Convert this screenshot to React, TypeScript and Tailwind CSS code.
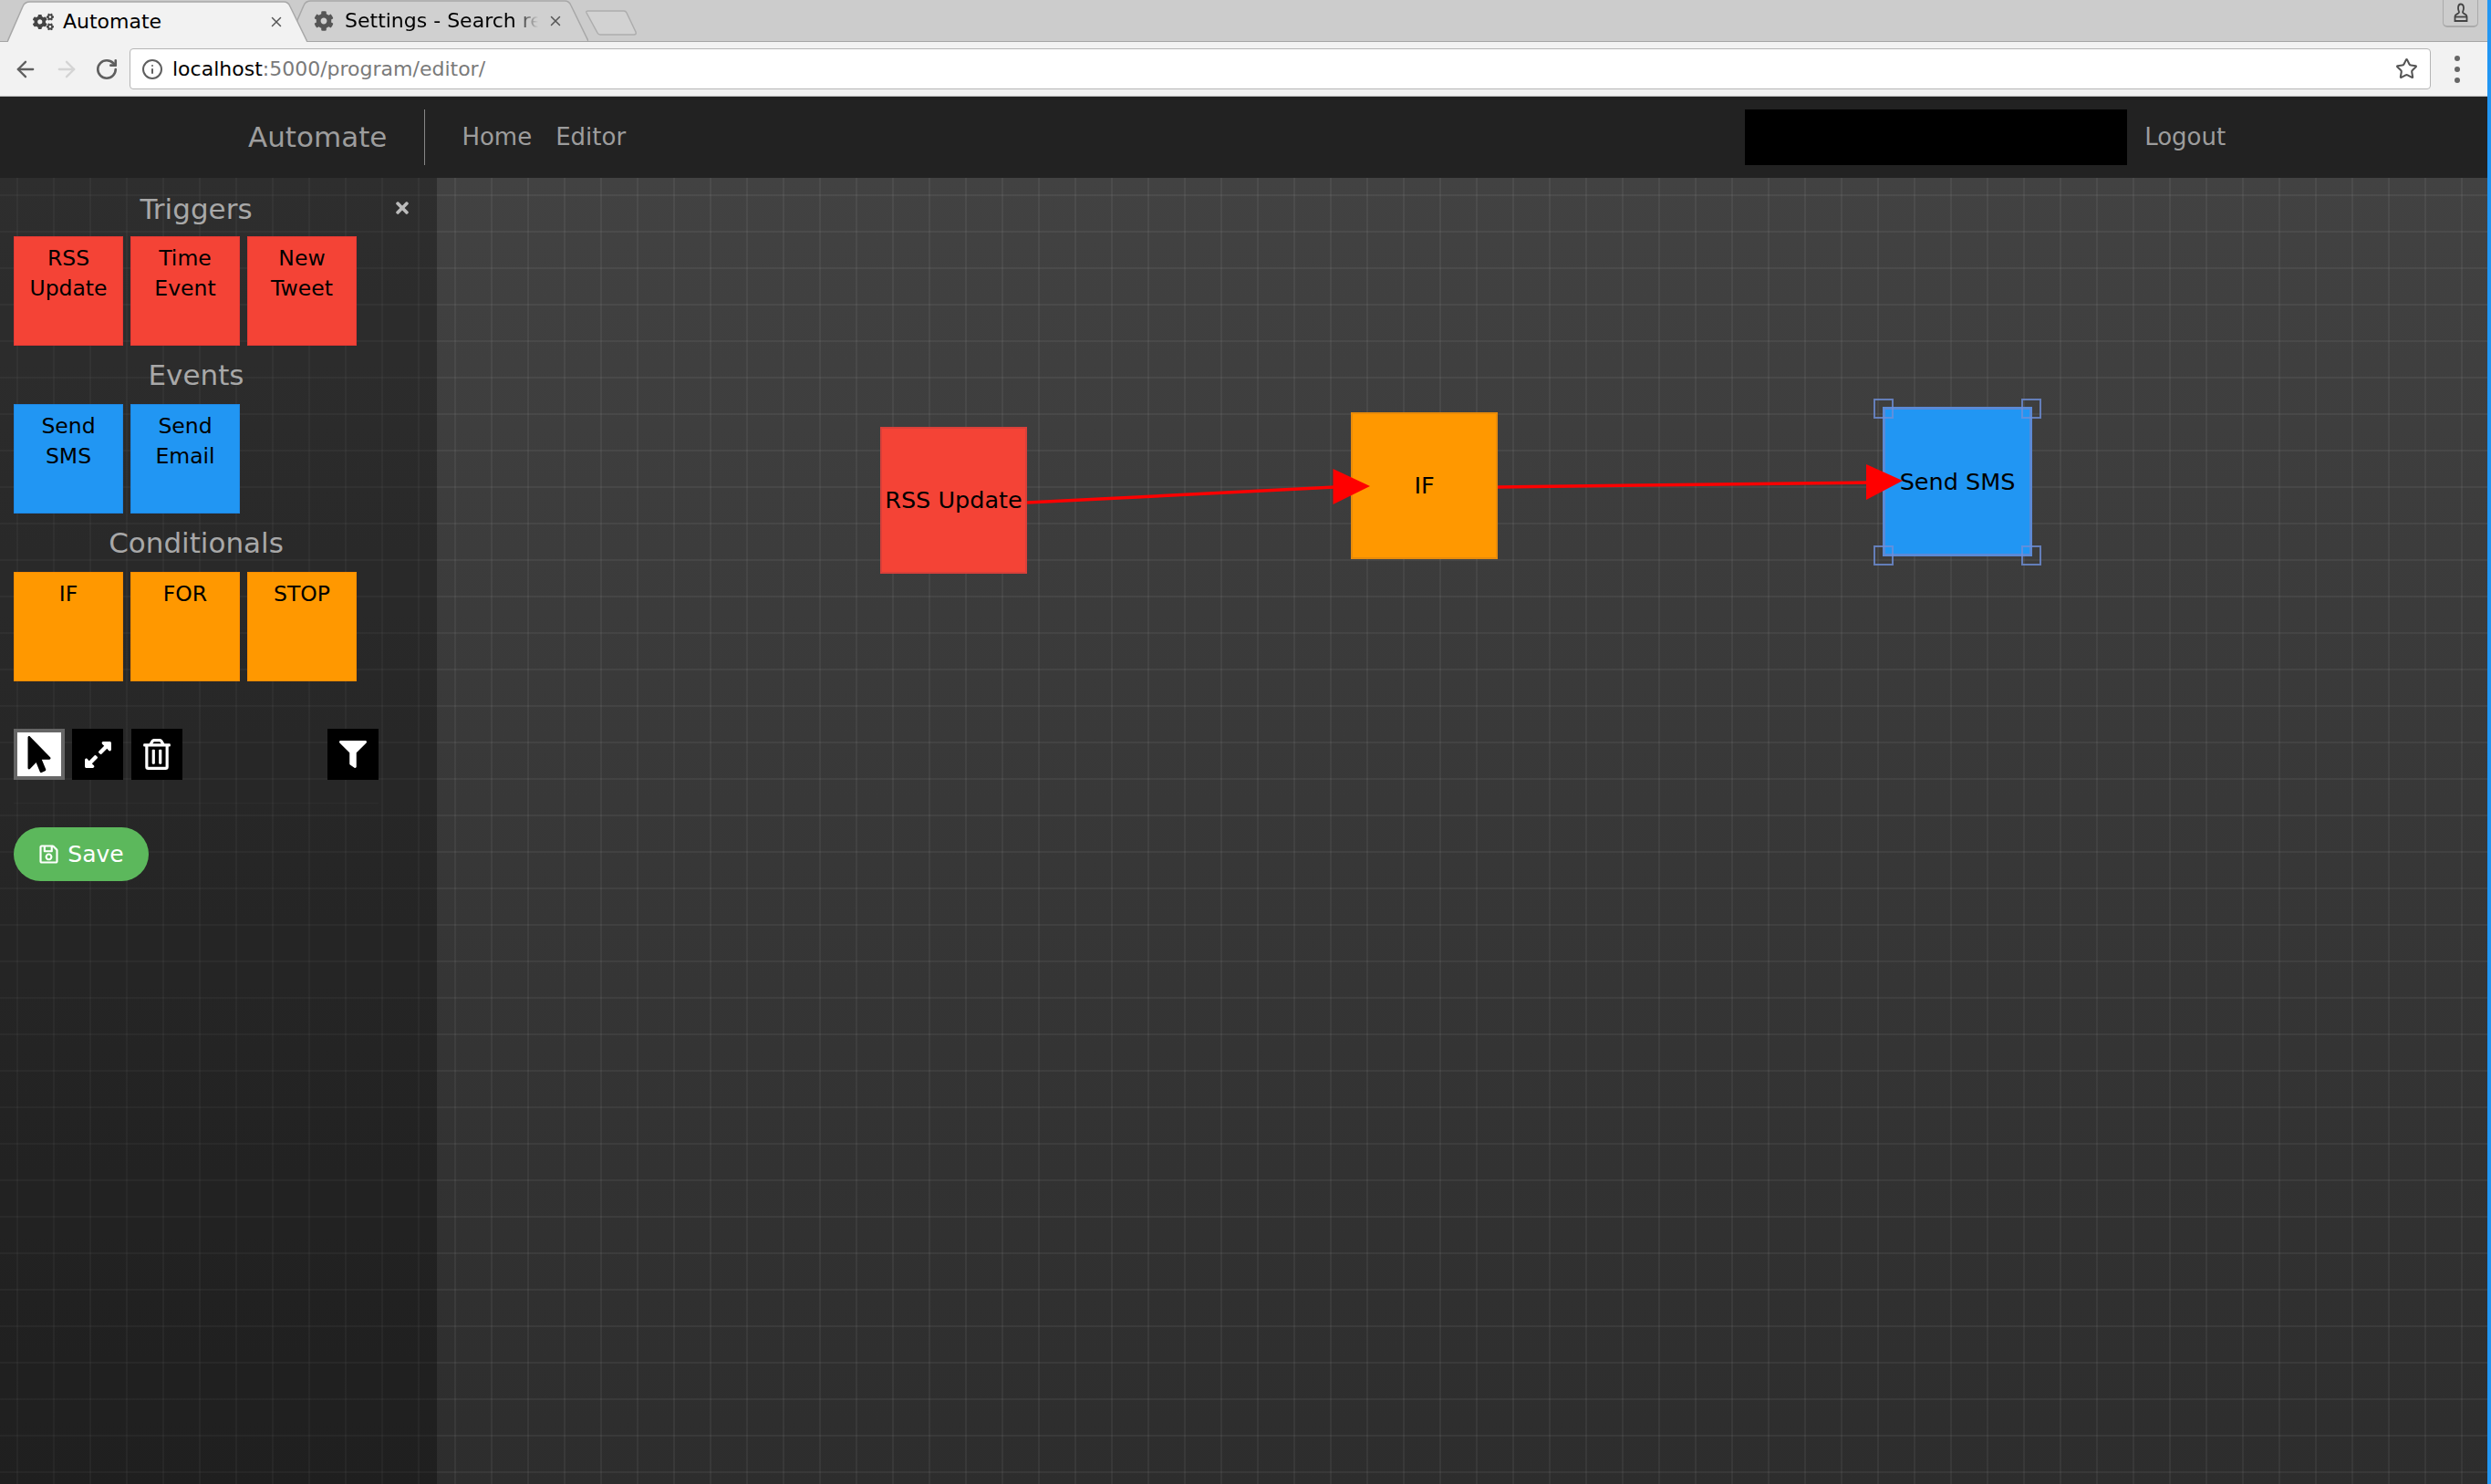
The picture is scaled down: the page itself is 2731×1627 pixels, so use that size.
import { ArrowLeft, ArrowRight, Info, RotateCw, Star, X } from 'lucide-react';
import { FaCog, FaCogs, FaExpandAlt, FaFilter, FaMousePointer, FaRegSave, FaRegTrashAlt, FaTimes } from 'react-icons/fa';

function TabShape({ fill }: { fill: string }) {
  return (
    <svg className="absolute inset-0 w-full h-full" viewBox="0 0 329 45" fill="none">
      <path d="M0 45 L17 6 Q19 1 25 1 L303 1 Q308 1 310 6 L329 45 Z" fill={fill} />
      <path d="M0 45 L17 6 Q19 1 25 1 L303 1 Q308 1 310 6 L329 45" stroke="#a8a8a8" strokeWidth="1.5" />
    </svg>
  );
}

function PaletteBox({ label, color }: { label: string; color: string }) {
  return (
    <div className={`w-[120px] h-[120px] border text-black text-center text-[23.5px] leading-[33px] pt-[7px] whitespace-pre-line ${color}`}>
      {label}
    </div>
  );
}

const red = 'bg-[#f44336] border-[#e53935]';
const blue = 'bg-[#2196f3] border-[#1e88e5]';
const orange = 'bg-[#ff9800] border-[#fb8c00]';

export default function App() {
  return (
    <div className="w-[2731px] h-[1627px] overflow-hidden flex flex-col font-['DejaVu_Sans',sans-serif] bg-[#2196f3] pr-[4px]">
      {/* browser tabs */}
      <div className="h-[46px] shrink-0 bg-[#cccccc] border-b border-[#a5a5a5] flex items-end pl-[8px] relative">
        <div className="relative z-10 w-[329px] h-[45px] flex items-center text-black text-[22px] -mb-px">
          <TabShape fill="#f2f2f2" />
          <FaCogs className="relative ml-[28px] w-[23px] h-[20px] text-[#444]" />
          <span className="relative ml-[10px]">Automate</span>
          <X className="relative ml-auto mr-[25px] w-[18px] h-[18px] text-[#555]" strokeWidth={2} />
        </div>
        <div className="relative w-[329px] h-[45px] -ml-[21px] flex items-center text-black text-[22px]">
          <TabShape fill="#d0d0d0" />
          <FaCog className="relative ml-[28px] w-[22px] h-[22px] text-[#555]" />
          <span className="relative ml-[12px] w-[212px] overflow-hidden whitespace-nowrap bg-[linear-gradient(to_right,#000_88%,transparent_100%)] bg-clip-text text-transparent">Settings - Search results</span>
          <X className="relative ml-auto mr-[27px] w-[18px] h-[18px] text-[#555]" strokeWidth={2} />
        </div>
        <svg className="ml-[-4px] mb-[6px] w-[58px] h-[28px]" viewBox="0 0 58 28" fill="none">
          <path d="M2 3 Q1 1 4 1 L43 1 Q45 1 46 3 L56 24 Q57 27 54 27 L17 27 Q15 27 14 25 Z" fill="#d2d2d2" stroke="#adadad" strokeWidth="1.5" />
        </svg>
        <div className="absolute right-[10px] top-0 w-[39px] h-[30px] border border-t-0 border-[#aaa] border-b-2 rounded-b-[5px] flex items-center justify-center">
          <svg className="w-[16px] h-[22px]" viewBox="0 0 16 22" fill="none" stroke="#444" strokeWidth="1.8">
            <path d="M8 1.5 C5.5 1.5 5 4 5 6 C5 8 6 9.5 6 10.5 C6 12 1.5 12.5 1.5 15 L1.5 20 L14.5 20 L14.5 15 C14.5 12.5 10 12 10 10.5 C10 9.5 11 8 11 6 C11 4 10.5 1.5 8 1.5 Z" />
            <path d="M1.5 15.5 H14.5" />
          </svg>
        </div>
      </div>

      {/* browser toolbar */}
      <div className="h-[60px] shrink-0 bg-[#f2f2f2] border-b border-[#b8b8b8] flex items-center text-[#5f5f5f]">
        <ArrowLeft className="ml-[14px] w-[28px] h-[28px]" strokeWidth={2} />
        <ArrowRight className="ml-[17px] w-[28px] h-[28px] text-[#d4d4d4]" strokeWidth={2} />
        <RotateCw className="ml-[17px] w-[26px] h-[26px]" strokeWidth={2.4} />
        <div className="ml-[12px] w-[2523px] h-[45px] bg-white border border-[#b5b5b5] rounded-[4px] flex items-center">
          <Info className="ml-[12px] w-[24px] h-[24px]" strokeWidth={2} />
          <span className="ml-[10px] text-[22px] text-[#7a7a7a]"><span className="text-black">localhost</span>:5000/program/editor/</span>
          <Star className="ml-auto mr-[13px] w-[25px] h-[25px] text-[#555]" strokeWidth={2} />
        </div>
        <div className="ml-[26px] flex flex-col gap-[6px]">
          <div className="w-[6px] h-[6px] rounded-full bg-[#666]" />
          <div className="w-[6px] h-[6px] rounded-full bg-[#666]" />
          <div className="w-[6px] h-[6px] rounded-full bg-[#666]" />
        </div>
      </div>

      {/* app navbar */}
      <div className="h-[89px] shrink-0 bg-[#222222] flex items-center text-[#9d9d9d]">
        <span className="ml-[272px] text-[31px]">Automate</span>
        <div className="ml-[41px] w-px h-[61px] bg-[#888]" />
        <span className="ml-[40px] text-[26px]">Home</span>
        <span className="ml-[26px] text-[26px]">Editor</span>
        <div className="ml-[1227px] w-[419px] h-[61px] bg-black" />
        <span className="ml-[19px] text-[26px]">Logout</span>
      </div>

      {/* editor */}
      <div className="flex-1 flex bg-[linear-gradient(to_right,rgba(255,255,255,0.05)_2px,transparent_2px),linear-gradient(to_bottom,rgba(255,255,255,0.05)_2px,transparent_2px),linear-gradient(to_bottom,#424242,#2d2d2d)] bg-[size:40px_40px,40px_40px,100%_100%] bg-[position:18px_0,0_18px,0_0]">
        <div className="w-[479px] shrink-0 bg-black/30 relative pl-[15px]">
          <FaTimes className="absolute left-[432px] top-[23px] w-[18px] h-[20px] text-[#bbbbbb]" />
          <div className="w-[400px] text-center text-[31px] leading-[40px] text-[#a8a8a8] pt-[14px] pb-[10px]">Triggers</div>
          <div className="flex gap-[8px]">
            <PaletteBox label={'RSS\nUpdate'} color={red} />
            <PaletteBox label={'Time\nEvent'} color={red} />
            <PaletteBox label={'New\nTweet'} color={red} />
          </div>
          <div className="w-[400px] text-center text-[31px] leading-[40px] text-[#a8a8a8] pt-[12px] pb-[12px]">Events</div>
          <div className="flex gap-[8px]">
            <PaletteBox label={'Send\nSMS'} color={blue} />
            <PaletteBox label={'Send\nEmail'} color={blue} />
          </div>
          <div className="w-[400px] text-center text-[31px] leading-[40px] text-[#a8a8a8] pt-[12px] pb-[12px]">Conditionals</div>
          <div className="flex gap-[8px]">
            <PaletteBox label="IF" color={orange} />
            <PaletteBox label="FOR" color={orange} />
            <PaletteBox label="STOP" color={orange} />
          </div>

          <div className="w-[400px] mt-[52px] pb-[25px] border-b border-white/[0.03] flex">
            <div className="w-[56px] h-[56px] bg-white border-[4px] border-[#666] flex items-center justify-center">
              <FaMousePointer className="w-[30px] h-[40px] text-black" />
            </div>
            <div className="ml-[8px] w-[56px] h-[56px] bg-black flex items-center justify-center">
              <FaExpandAlt className="w-[33px] h-[33px] text-white" />
            </div>
            <div className="ml-[9px] w-[56px] h-[56px] bg-black flex items-center justify-center">
              <FaRegTrashAlt className="w-[30px] h-[34px] text-white" />
            </div>
            <div className="ml-auto w-[56px] h-[56px] bg-black flex items-center justify-center">
              <FaFilter className="w-[30px] h-[30px] text-white" />
            </div>
          </div>

          <button className="mt-[26px] w-[148px] h-[59px] rounded-full bg-[#5cb85c] text-white text-[25px] flex items-center justify-center gap-[9px]">
            <FaRegSave className="w-[23px] h-[23px]" />
            Save
          </button>
        </div>

        {/* canvas */}
        <div className="flex-1 relative">
          <div className="absolute left-[486px] top-[273px] w-[161px] h-[161px] bg-[#f44336] border-2 border-[#d9403a] flex items-center justify-center text-black text-[25.5px] whitespace-nowrap">RSS Update</div>
          <div className="absolute left-[1002px] top-[257px] w-[161px] h-[161px] bg-[#ff9800] border-2 border-[#e88b0a] flex items-center justify-center text-black text-[25.5px]">IF</div>
          <div className="absolute left-[1585px] top-[251px] w-[164px] h-[164px] bg-[#2196f3] border-[3px] border-[#5b8ad6] flex items-center justify-center text-black text-[25.5px] whitespace-nowrap">Send SMS</div>
          <div className="absolute left-[1575px] top-[242px] w-[22px] h-[22px] border-2 border-[#6e8fd8]/80" />
          <div className="absolute left-[1737px] top-[242px] w-[22px] h-[22px] border-2 border-[#6e8fd8]/80" />
          <div className="absolute left-[1575px] top-[403px] w-[22px] h-[22px] border-2 border-[#6e8fd8]/80" />
          <div className="absolute left-[1737px] top-[403px] w-[22px] h-[22px] border-2 border-[#6e8fd8]/80" />
          {/* edges, canvas coordinates */}
          <svg className="absolute left-0 top-0 w-[2248px] h-[600px] pointer-events-none" viewBox="0 0 2248 600">
            <path d="M647 356 L985 339" stroke="#ff0000" strokeWidth="3.5" />
            <path d="M982.5 319 L1023 338 L982.5 358 Z" fill="#ff0000" />
            <path d="M1163 339 L1570 334" stroke="#ff0000" strokeWidth="3.5" />
            <path d="M1567 314 L1607 332 L1567 353 Z" fill="#ff0000" />
          </svg>
        </div>
      </div>
    </div>
  );
}
